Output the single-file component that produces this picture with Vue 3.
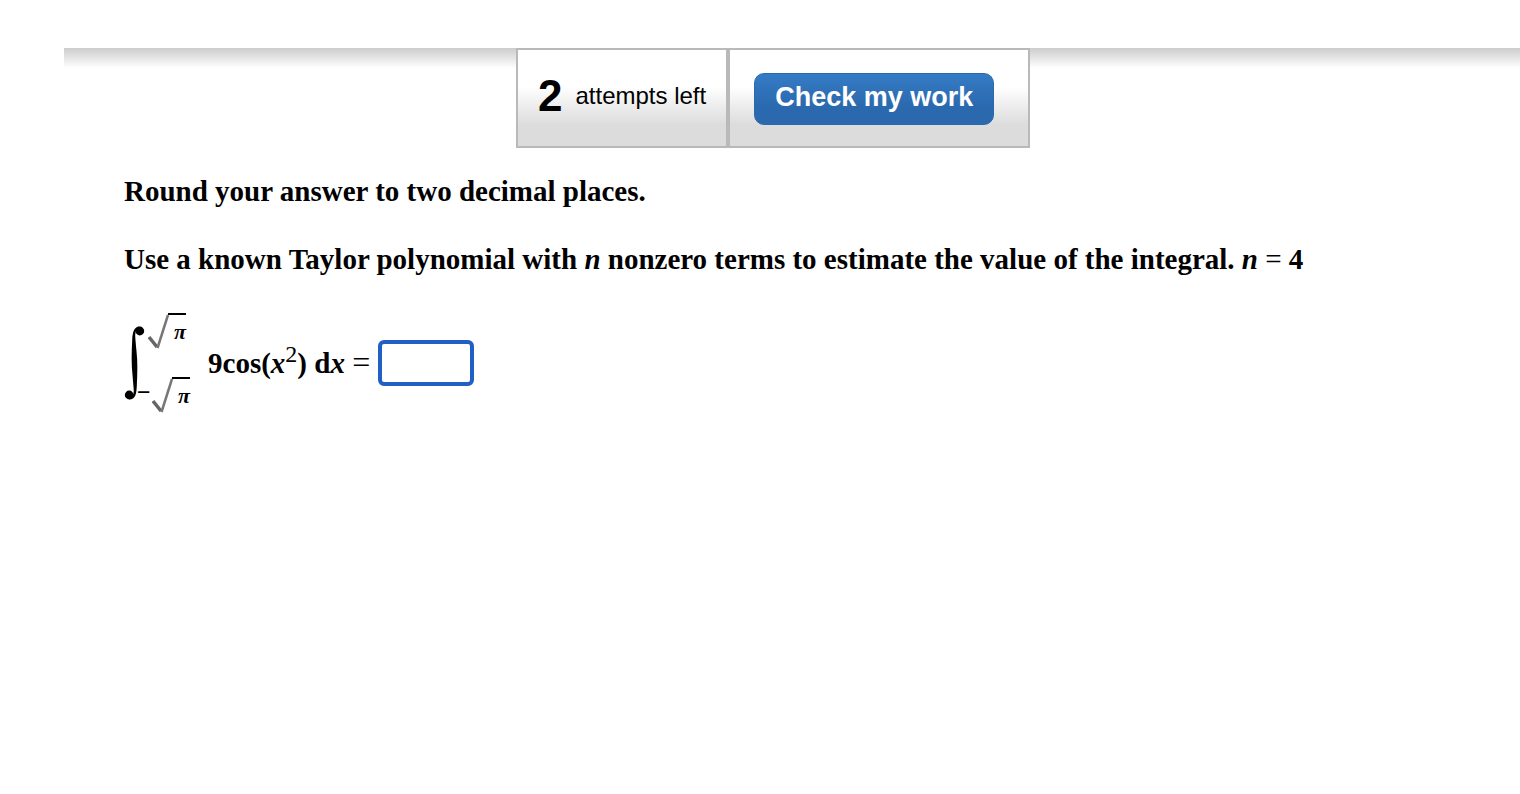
<script setup>
import { ref } from 'vue'

const attempts = ref(2)
const answer = ref('')
</script>

<template>
  <main class="page">
    <header class="toolbar">
      <div class="panel">
        <div class="cell attempts">
          <strong class="count">{{ attempts }}</strong>
          <span>attempts left</span>
        </div>
        <div class="cell action">
          <button type="button" class="check">Check my work</button>
        </div>
      </div>
    </header>

    <section class="question">
      <p>Round your answer to two decimal places.</p>
      <p>
        Use a known Taylor polynomial with <i>n</i> nonzero terms to estimate the value of the
        integral. <i>n</i> <span class="regular">=</span> 4
      </p>
      <div class="equation">
        <svg class="integral" viewBox="0 0 22 74" role="img" aria-label="integral">
          <circle cx="15.8" cy="5" r="4.4" />
          <circle cx="5.2" cy="69" r="4.4" />
          <path d="M15.8 .6C10 .6 8.6 6 8.2 14C7.6 26 7.2 38 8.6 50C9.2 58 9.8 62 9.8 65C9.6 69 8 72 5.2 73.4C11.5 73.4 12.4 68 12.8 60C13.4 48 13.8 36 12.4 24C11.8 16 11.2 12 11.2 9C11.4 5 13 2 15.8 .6Z" />
        </svg>
        <span class="limits">
          <span class="limit upper">
            <svg class="surd" viewBox="0 0 38 36" aria-hidden="true">
              <path d="M1 24 L9 34" stroke="#666" stroke-width="3.5" />
              <path d="M9.5 35 L20 2" stroke="#777" stroke-width="2.5" />
              <path d="M20 1 H38" stroke="#000" stroke-width="2" />
            </svg>
            <i class="pi">π</i>
          </span>
          <span class="limit">
            <span class="minus">−</span>
            <svg class="surd" viewBox="0 0 38 36" aria-hidden="true">
              <path d="M1 24 L9 34" stroke="#666" stroke-width="3.5" />
              <path d="M9.5 35 L20 2" stroke="#777" stroke-width="2.5" />
              <path d="M20 1 H38" stroke="#000" stroke-width="2" />
            </svg>
            <i class="pi">π</i>
          </span>
        </span>
        <label class="integrand" for="answer">9cos(<i>x</i><sup>2</sup>) d<i>x</i> <span class="equals">=</span></label>
        <input id="answer" v-model="answer" class="answer" type="text" autocomplete="off" />
      </div>
    </section>
  </main>
</template>

<style>
body {
  background: #fff;
}
</style>

<style scoped>
.page {
  padding: 48px 0 0 64px;
  color: #000;
}
.toolbar {
  display: flex;
  padding-left: 452px;
  background: linear-gradient(#ccc, #fff) 0 0 / 100% 20px no-repeat;
  font-family: "Liberation Sans", Arial, sans-serif;
}
.panel {
  display: flex;
}
.cell {
  box-sizing: border-box;
  height: 100px;
  display: flex;
  border: 2px solid #b9b9b9;
  background: linear-gradient(#fff 38%, #dcdcdc 78%);
}
.attempts {
  align-items: center;
  gap: 13px;
  padding: 0 20px 4px;
  font-size: 24px;
}
.count {
  font-size: 44px;
}
.action {
  align-items: flex-start;
  padding: 23px 34px 0 24px;
}
.check {
  height: 52px;
  padding: 0 20px 4px;
  border: 1px solid #2a69ad;
  border-radius: 10px;
  background: linear-gradient(#347bc5, #2b69ae 65%);
  color: #fff;
  font: bold 27px "Liberation Sans", Arial, sans-serif;
  cursor: pointer;
}
.question {
  padding: 26px 60px 0;
  font: bold 29px/34px "Liberation Serif", "Times New Roman", serif;
}
.question p {
  margin: 0 0 34px;
}
.regular {
  font-weight: normal;
}
.equation {
  display: flex;
  align-items: center;
  height: 105px;
}
.integral {
  width: 22px;
  height: 74px;
  margin-right: -9px;
}
.limits {
  display: flex;
  flex-direction: column;
  gap: 28px;
}
.limit {
  display: flex;
  height: 36px;
}
.upper {
  margin-left: 11px;
}
.surd {
  width: 38px;
  height: 36px;
  fill: none;
}
.pi {
  margin-left: -12px;
  font-size: 22px;
  line-height: 38px;
}
.minus {
  width: 15px;
  font-size: 24px;
  line-height: 30px;
}
.integrand {
  margin-left: 18px;
  white-space: nowrap;
}
.integrand sup {
  font-size: 24px;
  font-weight: normal;
  line-height: 0;
}
.equals {
  font-size: 32px;
  font-weight: normal;
  line-height: 0;
}
.answer {
  box-sizing: border-box;
  width: 96px;
  height: 46px;
  margin-left: 8px;
  padding: 2px 6px;
  border: 4px solid #2060c4;
  border-radius: 6px;
  background: #fff;
  font: 26px "Liberation Sans", Arial, sans-serif;
  outline: none;
}
</style>
